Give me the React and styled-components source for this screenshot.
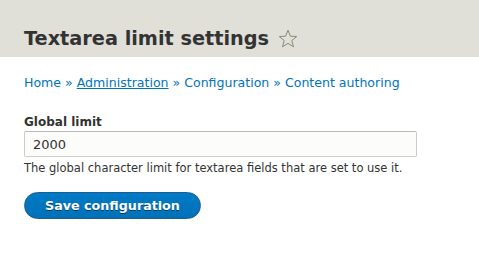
import React from "react";
import styled, { createGlobalStyle } from "styled-components";

const Global = createGlobalStyle`
  html, body { margin: 0; padding: 0; background: #fff; }
  body { font-family: "DejaVu Sans", "Liberation Sans", sans-serif; color: #333; }
`;

const Header = styled.header`
  background: #e0e0d8;
  height: 57px;
  box-sizing: border-box;
  padding: 21px 24px 0;
  display: flex;
  align-items: center;
`;

const Title = styled.h1`
  margin: 0;
  font-size: 19.3px;
  font-weight: bold;
  color: #333;
  line-height: 26px;
  display: flex;
  align-items: center;
  gap: 9px;
`;

const Content = styled.main`
  padding: 16px 24px 0;
`;

const Breadcrumb = styled.nav`
  font-size: 12.55px;
  line-height: 20px;
  color: #0074bd;
  margin-bottom: 21px;
`;

const Crumb = styled.a`
  color: #0074bd;
  text-decoration: ${(p) => (p.$underline ? "underline" : "none")};
`;

const Label = styled.label`
  display: block;
  font-weight: bold;
  font-size: 12px;
  line-height: 16px;
  color: #333;
  margin-bottom: 1px;
`;

const Input = styled.input`
  box-sizing: border-box;
  width: 393px;
  height: 26px;
  border: 1px solid #ccc;
  border-top-color: #bbb;
  background: #fcfcfa;
  font-family: inherit;
  font-size: 13px;
  color: #333;
  padding: 2px 8px;
  border-radius: 2px;
  display: block;
`;

const Description = styled.div`
  font-size: 11.5px;
  line-height: 16px;
  color: #333;
  margin-top: 3px;
  margin-bottom: 16px;
`;

const Button = styled.button`
  width: 177px;
  height: 27px;
  border-radius: 14px;
  border: 1px solid #1e5c90;
  background: linear-gradient(#007bc6, #0071b8);
  color: #fff;
  font-family: inherit;
  font-weight: bold;
  font-size: 12.7px;
  text-shadow: 0 1px rgba(0, 0, 0, 0.5);
  padding: 0;
`;

const Star = () => (
  <svg width="20" height="20" viewBox="0 0 20 20">
    <path
      d="M10 1.2 L12.4 7.2 L18.8 7.5 L13.8 11.5 L15.5 17.8 L10 14.3 L4.5 17.8 L6.2 11.5 L1.2 7.5 L7.6 7.2 Z"
      fill="none"
      stroke="#8a8a78"
      strokeWidth="1"
      strokeLinejoin="round"
    />
  </svg>
);

export default function App() {
  return (
    <>
      <Global />
      <Header>
        <Title>
          Textarea limit settings <Star />
        </Title>
      </Header>
      <Content>
        <Breadcrumb>
          <Crumb href="#">Home</Crumb> » <Crumb href="#" $underline>Administration</Crumb> »{" "}
          <Crumb href="#">Configuration</Crumb> » <Crumb href="#">Content authoring</Crumb>
        </Breadcrumb>
        <Label htmlFor="gl">Global limit</Label>
        <Input id="gl" defaultValue="2000" />
        <Description>The global character limit for textarea fields that are set to use it.</Description>
        <Button>Save configuration</Button>
      </Content>
    </>
  );
}
